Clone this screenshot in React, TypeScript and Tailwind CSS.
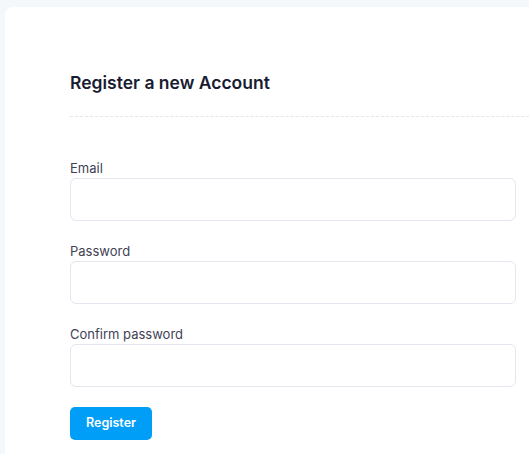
export default function App() {
  const fields = [
    { id: "email", label: "Email", type: "email" },
    { id: "password", label: "Password", type: "password" },
    { id: "confirm", label: "Confirm password", type: "password" },
  ];

  return (
    <div className="h-screen overflow-hidden bg-[#f5f8fa] pl-[5px] pt-[7px] font-['Inter',sans-serif]">
      <div className="h-[600px] w-[700px] rounded-tl-lg bg-white pl-[65px] pt-[62px]">
        <div className="border-b border-dashed border-[#e4e6ef] pb-[19px]">
          <h1 className="text-[17.5px] font-semibold leading-7 text-[#181c32]">Register a new Account</h1>
        </div>

        <form className="mt-[41px] flex w-[446px] flex-col gap-5">
          {fields.map((field) => (
            <div key={field.id}>
              <label className="block text-[13px] leading-5 text-[#3f4254]" htmlFor={field.id}>
                {field.label}
              </label>
              <input
                className="block h-[43px] w-full rounded-md border border-[#e4e6ef] bg-white px-3 text-sm outline-none"
                id={field.id}
                type={field.type}
              />
            </div>
          ))}

          <div>
            <button
              className="h-[33px] w-[82px] rounded-[5px] bg-[#009ef7] text-[12.5px] font-semibold text-white"
              type="button"
            >
              Register
            </button>
          </div>
        </form>
      </div>
    </div>
  );
}
